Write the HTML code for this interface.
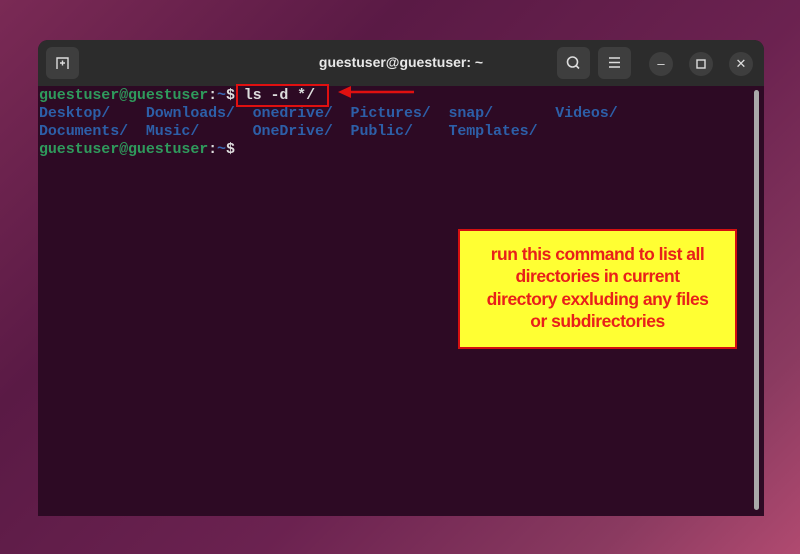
<!DOCTYPE html>
<html><head><style>
body{margin:0;width:800px;height:554px;overflow:hidden;background:linear-gradient(135deg,#7a2a55 0%,#5a1a45 30%,#6b2250 60%,#8a3a60 85%,#b04a70 100%);font-family:"Liberation Sans",sans-serif;position:relative}
.win{position:absolute;left:38px;top:40px;width:726px;height:476px;background:#2d0a24;border-radius:10px 10px 0 0;overflow:hidden}
.hdr{position:absolute;left:0;top:0;width:726px;height:46px;background:#2c2c2c}
.btn{position:absolute;top:7px;width:33px;height:32px;background:#3e3e3e;border-radius:6px}
.rb{position:absolute;top:12px;width:24px;height:24px;border-radius:50%;background:#3e3e3e;color:#ddd;text-align:center;line-height:24px;font-size:13px}
.title{position:absolute;left:0;width:726px;top:14px;text-align:center;color:#e8e8e8;font-weight:bold;font-size:14px}
.term{position:absolute;left:1px;top:47px;font-family:"Liberation Mono",monospace;font-size:15px;letter-spacing:-0.1px;line-height:18px;white-space:pre;font-weight:bold}
.g{color:#2f9a5c}.b{color:#2d5fa8}.w{color:#ddd}.d{color:#3a66b0}
.note{position:absolute;left:458px;top:229px;background:#ffff33;border:2px solid #d41010;color:#e8201a;font-weight:bold;font-size:17.5px;letter-spacing:-0.5px;line-height:22.3px;text-align:center;padding-top:12px;box-sizing:border-box;width:279px;height:120px}
</style></head><body>
<div class="win">
<div class="hdr">
<div class="btn" style="left:8px"><svg width="33" height="32"><path d="M11 22V11h11v11M14 16h5M16.5 13.5v5" stroke="#ddd" stroke-width="1.4" fill="none"/></svg></div>
<div class="title">guestuser@guestuser: ~</div>
<div class="btn" style="left:519px"><svg width="33" height="32"><circle cx="15.5" cy="15" r="5" stroke="#ddd" stroke-width="1.6" fill="none"/><path d="M19 18.5l3 3" stroke="#ddd" stroke-width="1.6"/></svg></div>
<div class="btn" style="left:560px"><svg width="33" height="32"><path d="M11 11h11M11 15.5h11M11 20h11" stroke="#ddd" stroke-width="1.5"/></svg></div>
<div class="rb" style="left:611px">–</div>
<div class="rb" style="left:651px"><svg width="24" height="24"><rect x="8" y="8" width="8" height="8" stroke="#ddd" stroke-width="1.4" fill="none"/></svg></div>
<div class="rb" style="left:691px">✕</div>
</div>
<div class="term"><span class="g">guestuser@guestuser</span><span class="w">:</span><span class="d">~</span><span class="w">$ ls -d */</span>
<span class="b">Desktop/    Downloads/  onedrive/  Pictures/  snap/       Videos/
Documents/  Music/      OneDrive/  Public/    Templates/</span>
<span class="g">guestuser@guestuser</span><span class="w">:</span><span class="d">~</span><span class="w">$</span></div>
<div style="position:absolute;left:716px;top:50px;width:5px;height:420px;background:#aaa;border-radius:3px"></div>
</div>
<div style="position:absolute;left:236px;top:84px;width:89px;height:19px;border:2px solid #e01010"></div>
<svg style="position:absolute;left:334px;top:84px" width="84" height="16"><path d="M80 8H14" stroke="#e01010" stroke-width="2.5"/><path d="M4 8l13-6v12z" fill="#e01010"/></svg>
<div class="note">run this command to list all<br>directories in current<br>directory exxluding any files<br>or subdirectories</div>
</body></html>
